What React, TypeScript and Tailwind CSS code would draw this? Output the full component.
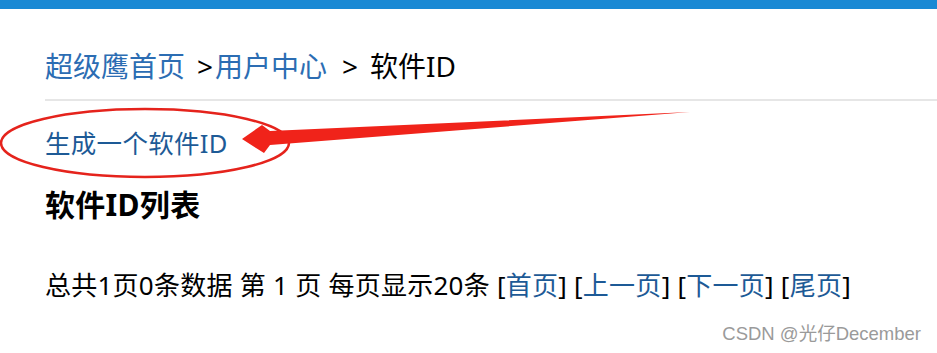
export default function App() {
  const font = "font-['Noto_Sans','Noto_Sans_CJK_SC',sans-serif]";
  return (
    <div className={`relative w-full h-[353px] bg-white overflow-hidden ${font}`}>
      <div className="h-[9px] bg-[#1a89d4]" />
      <div className="ml-[45px] mt-[37px] flex items-center text-[28px] leading-[40px] text-black whitespace-nowrap">
        <a className="text-[#2c6db3]">超级鹰首页</a>
        <span className="ml-[12px]">&gt;</span>
        <a className="ml-[2px] text-[#2c6db3]">用户中心</a>
        <span className="ml-[15px]">&gt;</span>
        <span className="ml-[12px]">软件ID</span>
      </div>
      <div className="ml-[45px] mt-[13px] h-[2px] bg-[#e6e6e6]" />
      <div className="ml-[45px] mt-[24px] text-[25.5px] leading-[36px] text-[#1d5a96] tracking-[0.3px]">
        <a>生成一个软件ID</a>
      </div>
      <div className="ml-[45px] mt-[23px] text-[30px] leading-[42px] font-bold text-black tracking-[0.3px]">软件ID列表</div>
      <div className="ml-[45px] mt-[40px] text-[26px] leading-[38px] text-black whitespace-nowrap tracking-[0.25px]">
        总共1页0条数据 第 1 页 每页显示20条 [<a className="text-[#1d5a96]">首页</a>] [
        <a className="text-[#1d5a96]">上一页</a>] [<a className="text-[#1d5a96]">下一页</a>] [
        <a className="text-[#1d5a96]">尾页</a>]
      </div>
      <div className="absolute right-[16px] top-[321px] text-[18.5px] leading-[26px] text-[#9a9a9a] font-['Liberation_Sans','Noto_Sans_CJK_SC',sans-serif]">
        CSDN @光仔December
      </div>
      <svg className="absolute left-0 top-0 pointer-events-none" width="937" height="353" viewBox="0 0 937 353">
        <ellipse cx="145" cy="143" rx="144" ry="34" fill="none" stroke="#e5231c" strokeWidth="2.5" />
        <path d="M690 112 L270 131 L262 125 L242 139 L264 153 L270 145 Z" fill="#f0231a" />
      </svg>
    </div>
  );
}
